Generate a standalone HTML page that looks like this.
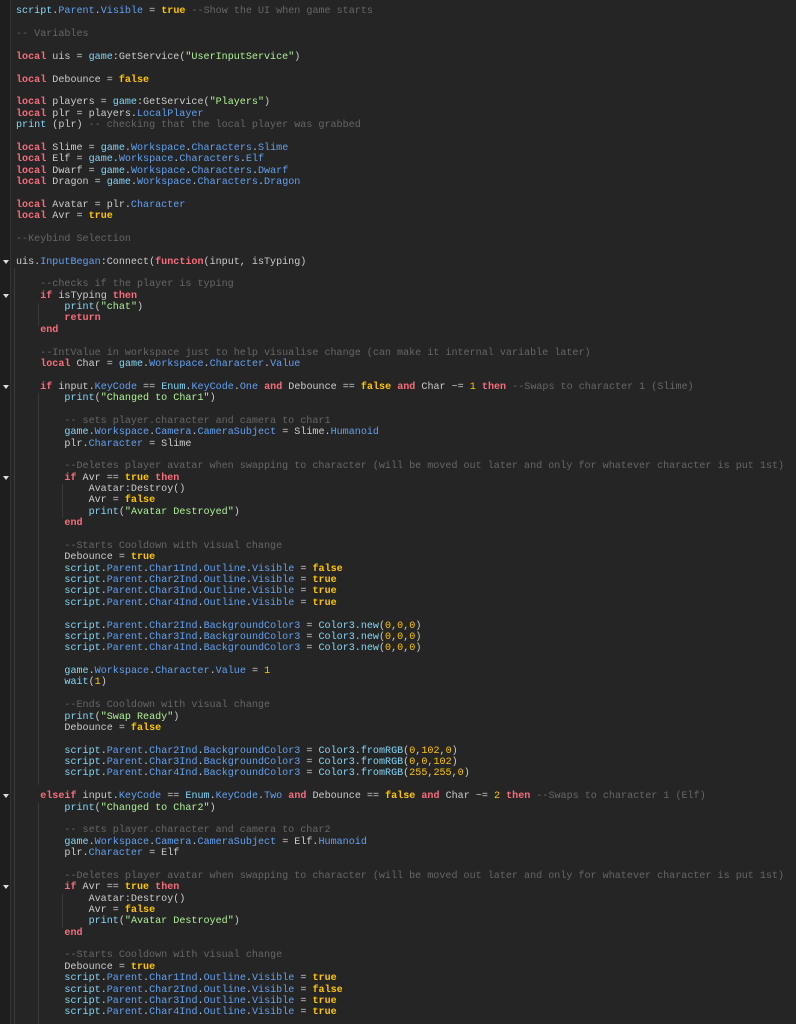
<!DOCTYPE html>
<html><head><meta charset="utf-8"><style>
html,body{margin:0;padding:0;width:796px;height:1024px;overflow:hidden;background:#252525}
#g{position:absolute;left:0;top:0;width:10px;height:1024px;background:#1e1e1e;border-right:1px solid #333}
#c{position:absolute;left:16px;top:6.3px;font-family:"Liberation Mono",monospace;font-size:10.08px;color:#cccccc}
#c div{height:11.375px;line-height:11.375px;white-space:pre;overflow:visible}
.k{color:#f86d7c;font-weight:bold}.y{color:#ffc600;font-weight:bold}.n{color:#ffc600}.b{color:#84d6f7}.p{color:#61a1f1}.s{color:#adf195}.c{color:#666666}
.gl{position:absolute;width:1px;background:#3a3a3a}
.ar{position:absolute;left:3px;width:0;height:0;border-left:3px solid transparent;border-right:3px solid transparent;border-top:4px solid #ddd}
</style></head><body>
<div id="g"></div>
<div class="gl" style="left:14px;top:268px;height:756px"></div>
<div class="gl" style="left:38px;top:303px;height:23px"></div>
<div class="gl" style="left:38px;top:393px;height:392px"></div>
<div class="gl" style="left:38px;top:803px;height:221px"></div>
<div class="gl" style="left:62px;top:484px;height:34px"></div>
<div class="gl" style="left:62px;top:894px;height:34px"></div>
<div class="ar" style="top:260px"></div>
<div class="ar" style="top:294px"></div>
<div class="ar" style="top:385px"></div>
<div class="ar" style="top:476px"></div>
<div class="ar" style="top:794px"></div>
<div class="ar" style="top:885px"></div>
<div id="c"><div><span class="b">script</span>.<span class="p">Parent</span>.<span class="p">Visible</span> = <span class="y">true</span> <span class="c">--Show the UI when game starts</span></div>
<div> </div>
<div><span class="c">-- Variables</span></div>
<div> </div>
<div><span class="k">local</span> uis = <span class="b">game</span>:GetService(<span class="s">"UserInputService"</span>)</div>
<div> </div>
<div><span class="k">local</span> Debounce = <span class="y">false</span></div>
<div> </div>
<div><span class="k">local</span> players = <span class="b">game</span>:GetService(<span class="s">"Players"</span>)</div>
<div><span class="k">local</span> plr = players.<span class="p">LocalPlayer</span></div>
<div><span class="b">print</span> (plr) <span class="c">-- checking that the local player was grabbed</span></div>
<div> </div>
<div><span class="k">local</span> Slime = <span class="b">game</span>.<span class="p">Workspace</span>.<span class="p">Characters</span>.<span class="p">Slime</span></div>
<div><span class="k">local</span> Elf = <span class="b">game</span>.<span class="p">Workspace</span>.<span class="p">Characters</span>.<span class="p">Elf</span></div>
<div><span class="k">local</span> Dwarf = <span class="b">game</span>.<span class="p">Workspace</span>.<span class="p">Characters</span>.<span class="p">Dwarf</span></div>
<div><span class="k">local</span> Dragon = <span class="b">game</span>.<span class="p">Workspace</span>.<span class="p">Characters</span>.<span class="p">Dragon</span></div>
<div> </div>
<div><span class="k">local</span> Avatar = plr.<span class="p">Character</span></div>
<div><span class="k">local</span> Avr = <span class="y">true</span></div>
<div> </div>
<div><span class="c">--Keybind Selection</span></div>
<div> </div>
<div>uis.<span class="p">InputBegan</span>:Connect(<span class="k">function</span>(input, isTyping)</div>
<div> </div>
<div>    <span class="c">--checks if the player is typing</span></div>
<div>    <span class="k">if</span> isTyping <span class="k">then</span></div>
<div>        <span class="b">print</span>(<span class="s">"chat"</span>)</div>
<div>        <span class="k">return</span></div>
<div>    <span class="k">end</span></div>
<div> </div>
<div>    <span class="c">--IntValue in workspace just to help visualise change (can make it internal variable later)</span></div>
<div>    <span class="k">local</span> Char = <span class="b">game</span>.<span class="p">Workspace</span>.<span class="p">Character</span>.<span class="p">Value</span></div>
<div> </div>
<div>    <span class="k">if</span> input.<span class="p">KeyCode</span> == <span class="b">Enum</span>.<span class="p">KeyCode</span>.<span class="p">One</span> <span class="k">and</span> Debounce == <span class="y">false</span> <span class="k">and</span> Char ~= <span class="n">1</span> <span class="k">then</span> <span class="c">--Swaps to character 1 (Slime)</span></div>
<div>        <span class="b">print</span>(<span class="s">"Changed to Char1"</span>)</div>
<div> </div>
<div>        <span class="c">-- sets player.character and camera to char1</span></div>
<div>        <span class="b">game</span>.<span class="p">Workspace</span>.<span class="p">Camera</span>.<span class="p">CameraSubject</span> = Slime.<span class="p">Humanoid</span></div>
<div>        plr.<span class="p">Character</span> = Slime</div>
<div> </div>
<div>        <span class="c">--Deletes player avatar when swapping to character (will be moved out later and only for whatever character is put 1st)</span></div>
<div>        <span class="k">if</span> Avr == <span class="y">true</span> <span class="k">then</span></div>
<div>            Avatar:Destroy()</div>
<div>            Avr = <span class="y">false</span></div>
<div>            <span class="b">print</span>(<span class="s">"Avatar Destroyed"</span>)</div>
<div>        <span class="k">end</span></div>
<div> </div>
<div>        <span class="c">--Starts Cooldown with visual change</span></div>
<div>        Debounce = <span class="y">true</span></div>
<div>        <span class="b">script</span>.<span class="p">Parent</span>.<span class="p">Char1Ind</span>.<span class="p">Outline</span>.<span class="p">Visible</span> = <span class="y">false</span></div>
<div>        <span class="b">script</span>.<span class="p">Parent</span>.<span class="p">Char2Ind</span>.<span class="p">Outline</span>.<span class="p">Visible</span> = <span class="y">true</span></div>
<div>        <span class="b">script</span>.<span class="p">Parent</span>.<span class="p">Char3Ind</span>.<span class="p">Outline</span>.<span class="p">Visible</span> = <span class="y">true</span></div>
<div>        <span class="b">script</span>.<span class="p">Parent</span>.<span class="p">Char4Ind</span>.<span class="p">Outline</span>.<span class="p">Visible</span> = <span class="y">true</span></div>
<div> </div>
<div>        <span class="b">script</span>.<span class="p">Parent</span>.<span class="p">Char2Ind</span>.<span class="p">BackgroundColor3</span> = <span class="b">Color3.new</span>(<span class="n">0</span>,<span class="n">0</span>,<span class="n">0</span>)</div>
<div>        <span class="b">script</span>.<span class="p">Parent</span>.<span class="p">Char3Ind</span>.<span class="p">BackgroundColor3</span> = <span class="b">Color3.new</span>(<span class="n">0</span>,<span class="n">0</span>,<span class="n">0</span>)</div>
<div>        <span class="b">script</span>.<span class="p">Parent</span>.<span class="p">Char4Ind</span>.<span class="p">BackgroundColor3</span> = <span class="b">Color3.new</span>(<span class="n">0</span>,<span class="n">0</span>,<span class="n">0</span>)</div>
<div> </div>
<div>        <span class="b">game</span>.<span class="p">Workspace</span>.<span class="p">Character</span>.<span class="p">Value</span> = <span class="n">1</span></div>
<div>        <span class="b">wait</span>(<span class="n">1</span>)</div>
<div> </div>
<div>        <span class="c">--Ends Cooldown with visual change</span></div>
<div>        <span class="b">print</span>(<span class="s">"Swap Ready"</span>)</div>
<div>        Debounce = <span class="y">false</span></div>
<div> </div>
<div>        <span class="b">script</span>.<span class="p">Parent</span>.<span class="p">Char2Ind</span>.<span class="p">BackgroundColor3</span> = <span class="b">Color3.fromRGB</span>(<span class="n">0</span>,<span class="n">102</span>,<span class="n">0</span>)</div>
<div>        <span class="b">script</span>.<span class="p">Parent</span>.<span class="p">Char3Ind</span>.<span class="p">BackgroundColor3</span> = <span class="b">Color3.fromRGB</span>(<span class="n">0</span>,<span class="n">0</span>,<span class="n">102</span>)</div>
<div>        <span class="b">script</span>.<span class="p">Parent</span>.<span class="p">Char4Ind</span>.<span class="p">BackgroundColor3</span> = <span class="b">Color3.fromRGB</span>(<span class="n">255</span>,<span class="n">255</span>,<span class="n">0</span>)</div>
<div> </div>
<div>    <span class="k">elseif</span> input.<span class="p">KeyCode</span> == <span class="b">Enum</span>.<span class="p">KeyCode</span>.<span class="p">Two</span> <span class="k">and</span> Debounce == <span class="y">false</span> <span class="k">and</span> Char ~= <span class="n">2</span> <span class="k">then</span> <span class="c">--Swaps to character 1 (Elf)</span></div>
<div>        <span class="b">print</span>(<span class="s">"Changed to Char2"</span>)</div>
<div> </div>
<div>        <span class="c">-- sets player.character and camera to char2</span></div>
<div>        <span class="b">game</span>.<span class="p">Workspace</span>.<span class="p">Camera</span>.<span class="p">CameraSubject</span> = Elf.<span class="p">Humanoid</span></div>
<div>        plr.<span class="p">Character</span> = Elf</div>
<div> </div>
<div>        <span class="c">--Deletes player avatar when swapping to character (will be moved out later and only for whatever character is put 1st)</span></div>
<div>        <span class="k">if</span> Avr == <span class="y">true</span> <span class="k">then</span></div>
<div>            Avatar:Destroy()</div>
<div>            Avr = <span class="y">false</span></div>
<div>            <span class="b">print</span>(<span class="s">"Avatar Destroyed"</span>)</div>
<div>        <span class="k">end</span></div>
<div> </div>
<div>        <span class="c">--Starts Cooldown with visual change</span></div>
<div>        Debounce = <span class="y">true</span></div>
<div>        <span class="b">script</span>.<span class="p">Parent</span>.<span class="p">Char1Ind</span>.<span class="p">Outline</span>.<span class="p">Visible</span> = <span class="y">true</span></div>
<div>        <span class="b">script</span>.<span class="p">Parent</span>.<span class="p">Char2Ind</span>.<span class="p">Outline</span>.<span class="p">Visible</span> = <span class="y">false</span></div>
<div>        <span class="b">script</span>.<span class="p">Parent</span>.<span class="p">Char3Ind</span>.<span class="p">Outline</span>.<span class="p">Visible</span> = <span class="y">true</span></div>
<div>        <span class="b">script</span>.<span class="p">Parent</span>.<span class="p">Char4Ind</span>.<span class="p">Outline</span>.<span class="p">Visible</span> = <span class="y">true</span></div></div>
</body></html>
